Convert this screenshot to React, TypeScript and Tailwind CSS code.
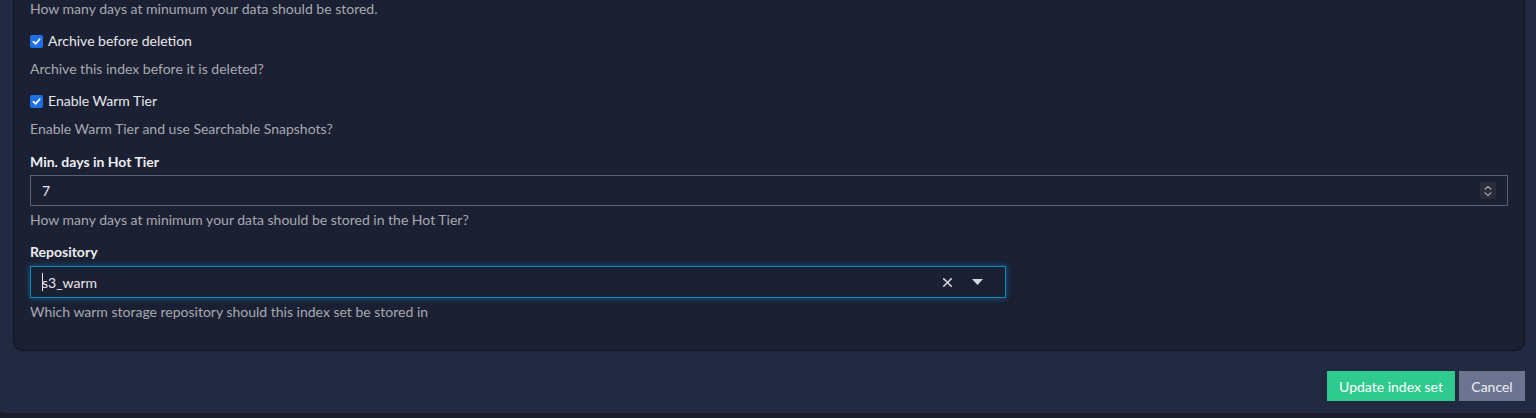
import React from 'react'
import { X, ChevronsUpDown } from 'lucide-react'

function CheckRow({ label }: { label: string }) {
  return (
    <label className="flex items-center gap-[5px] text-[14px] leading-[20px] text-[#e6e7ea]">
      <span className="flex h-[13px] w-[13px] items-center justify-center rounded-[2px] bg-[#1e6fe6]">
        <svg width="9" height="9" viewBox="0 0 10 10" fill="none">
          <path d="M1.5 5.2 L4 7.6 L8.6 2.4" stroke="#fff" strokeWidth="1.8" strokeLinecap="round" strokeLinejoin="round" />
        </svg>
      </span>
      {label}
    </label>
  )
}

function Help({ children, className = '' }: { children: React.ReactNode; className?: string }) {
  return <p className={`text-[14px] leading-[20px] text-[#a7a9b0] ${className}`}>{children}</p>
}

export default function App() {
  return (
    <div
      className="h-[418px] overflow-hidden bg-[#191d2c]"
      style={{ fontFamily: 'Lato, "Noto Sans", sans-serif' }}
    >
      <div className="h-[414px] bg-[#222a42] pl-[13px] pr-[11px] rounded-bl-[4px]">
        <div className="rounded-b-[10px] border border-t-0 border-[#11141f] bg-[#1c2033] px-[16px] pb-[28px]">
          <Help className="-mt-px">How many days at minumum your data should be stored.</Help>

          <div className="mt-[12px]">
            <CheckRow label="Archive before deletion" />
            <Help className="mt-[8px]">Archive this index before it is deleted?</Help>
          </div>

          <div className="mt-[12px]">
            <CheckRow label="Enable Warm Tier" />
            <Help className="mt-[8px]">Enable Warm Tier and use Searchable Snapshots?</Help>
          </div>

          <div className="mt-[13px]">
            <div className="text-[14px] font-bold leading-[20px] text-[#eceef1]">Min. days in Hot Tier</div>
            <div className="mt-[3px] flex h-[31px] items-center justify-between border border-[#5b6073] bg-[#1c2033] pl-[11px] pr-[11px]">
              <span className="text-[14px] text-[#e6e7ea]">7</span>
              <span className="flex h-[17px] w-[16px] items-center justify-center bg-[#2a2d39] text-[#a4a6ae]">
                <ChevronsUpDown size={14} strokeWidth={2} />
              </span>
            </div>
            <Help className="mt-[4px]">How many days at minimum your data should be stored in the Hot Tier?</Help>
          </div>

          <div className="mt-[12px]">
            <div className="text-[14px] font-bold leading-[20px] text-[#eceef1]">Repository</div>
            <div className="mt-[4px] flex h-[32px] w-[976px] items-center border border-[#0d8ac4] bg-[#1c2033] shadow-[0_0_6px_rgba(16,150,210,0.55)]">
              <div className="flex flex-1 items-center pl-[11px] text-[14px] text-[#e6e7ea]">
                <span className="mr-[-1px] inline-block h-[18px] w-px bg-[#e6e7ea]" />
                s3_warm
              </div>
              <X size={15} strokeWidth={2.6} className="mr-[17px] text-[#d6d7dc]" />
              <svg width="11" height="6" viewBox="0 0 11 6" className="mr-[22px]">
                <path d="M0 0 H11 L5.5 6 Z" fill="#d6d7dc" />
              </svg>
            </div>
            <Help className="mt-[4px]">Which warm storage repository should this index set be stored in</Help>
          </div>
        </div>

        <div className="mt-[20px] flex justify-end gap-[4px] pr-0">
          <button className="h-[30px] w-[128px] bg-[#2fcb8e] text-[14px] text-white">Update index set</button>
          <button className="h-[30px] w-[66px] bg-[#6c7390] text-[14px] text-[#eceef1]">Cancel</button>
        </div>
      </div>
    </div>
  )
}
